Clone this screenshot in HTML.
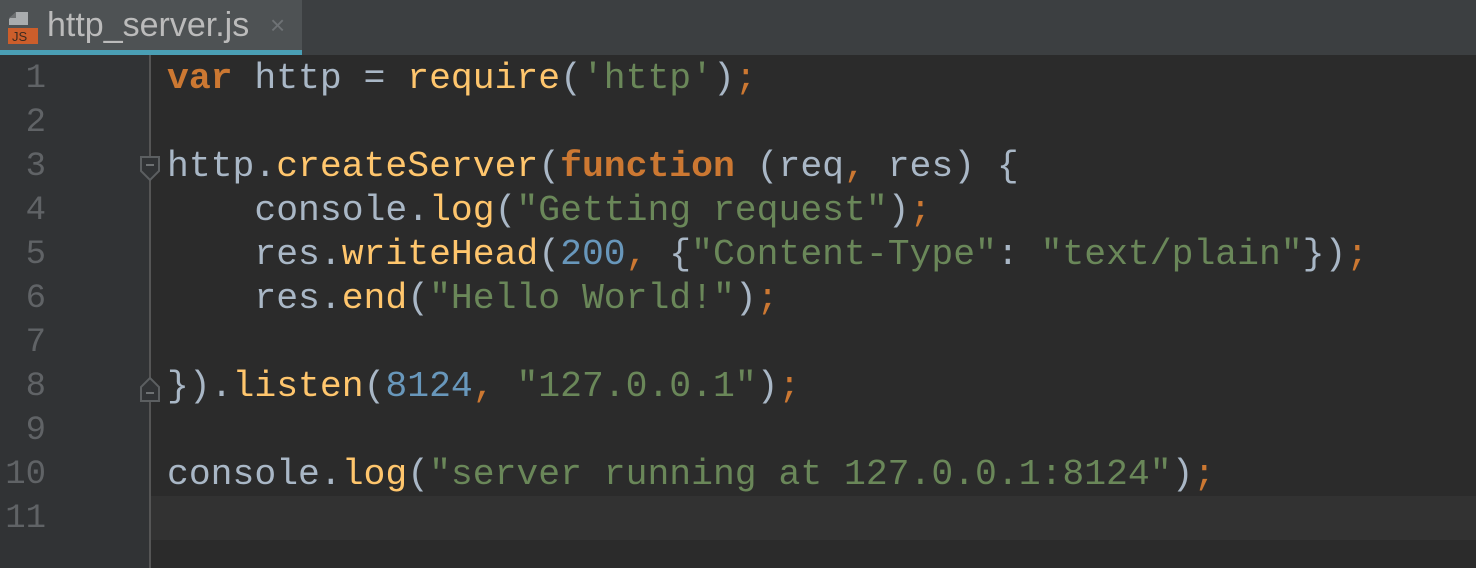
<!DOCTYPE html>
<html><head><style>
body{margin:0;width:1476px;height:568px;overflow:hidden;background:#2b2b2b;font-family:"DejaVu Sans Mono","Liberation Mono",monospace;position:relative}
.tabbar{position:absolute;left:0;top:0;width:1476px;height:55px;background:#3c3f41}
.tab{position:absolute;left:0;top:0;width:302px;height:50px;background:#4e5254;border-bottom:5px solid #4a9fb5}
.tabname{position:absolute;left:47px;top:6px;font-family:"Liberation Sans",sans-serif;font-size:34px;color:#bbbbbb}
.x{position:absolute;left:270px;top:10px;font-family:"Liberation Sans",sans-serif;font-size:26px;color:#6e7275}
.gutter{position:absolute;left:0;top:55px;width:149px;height:513px;background:#313335;border-right:2px solid #555555}
.cur{position:absolute;left:151px;top:496px;width:1325px;height:44px;background:#323232}
.ln{position:absolute;left:0;width:46px;text-align:right;font-family:"Liberation Mono",monospace;font-size:34px;color:#606366;line-height:44px}
.code{position:absolute;left:167px;top:57px;font-family:"Liberation Mono",monospace;font-size:36.4px;line-height:44px;color:#a9b7c6;white-space:pre}
.k{color:#cc7832;font-weight:bold}.o{color:#cc7832}.f{color:#ffc66d}.s{color:#6a8759}.n{color:#6897bb}
</style></head><body>
<div class="tabbar"><div class="tab">
<svg style="position:absolute;left:8px;top:11px" width="30" height="34"><path d="M8 1h12v13H1V8z" fill="#a9acae"/><path d="M1 7l7-6v6z" fill="#6d7072"/><rect x="0" y="17" width="30" height="16" fill="#cc5e2b"/><text x="4" y="30" font-family="Liberation Sans" font-size="13" fill="#3a2a20">JS</text></svg>
<div class="tabname">http_server.js</div><div class="x">×</div></div></div>
<div class="gutter"></div>
<div class="cur"></div>
<div class="ln" style="top:57px">1</div><div class="ln" style="top:101px">2</div><div class="ln" style="top:145px">3</div><div class="ln" style="top:189px">4</div><div class="ln" style="top:233px">5</div><div class="ln" style="top:277px">6</div><div class="ln" style="top:321px">7</div><div class="ln" style="top:365px">8</div><div class="ln" style="top:409px">9</div><div class="ln" style="top:453px">10</div><div class="ln" style="top:497px">11</div>
<svg style="position:absolute;left:139px;top:155px" width="22" height="30"><path d="M2 2h18v14l-9 9-9-9z" fill="#313335" stroke="#5c5f61" stroke-width="2"/><path d="M7 10h8" stroke="#6e7173" stroke-width="2"/></svg>
<svg style="position:absolute;left:139px;top:373px" width="22" height="30"><path d="M2 28h18V14L11 5 2 14z" fill="#313335" stroke="#5c5f61" stroke-width="2"/><path d="M7 20h8" stroke="#6e7173" stroke-width="2"/></svg>
<div class="code"><span class="k">var</span> http = <span class="f">require</span>(<span class="s">'http'</span>)<span class="o">;</span>

http.<span class="f">createServer</span>(<span class="k">function</span> (req<span class="o">,</span> res) {
    console.<span class="f">log</span>(<span class="s">"Getting request"</span>)<span class="o">;</span>
    res.<span class="f">writeHead</span>(<span class="n">200</span><span class="o">,</span> {<span class="s">"Content-Type"</span>: <span class="s">"text/plain"</span>})<span class="o">;</span>
    res.<span class="f">end</span>(<span class="s">"Hello World!"</span>)<span class="o">;</span>

}).<span class="f">listen</span>(<span class="n">8124</span><span class="o">,</span> <span class="s">"127.0.0.1"</span>)<span class="o">;</span>

console.<span class="f">log</span>(<span class="s">"server running at 127.0.0.1:8124"</span>)<span class="o">;</span>
</div>
</body></html>
